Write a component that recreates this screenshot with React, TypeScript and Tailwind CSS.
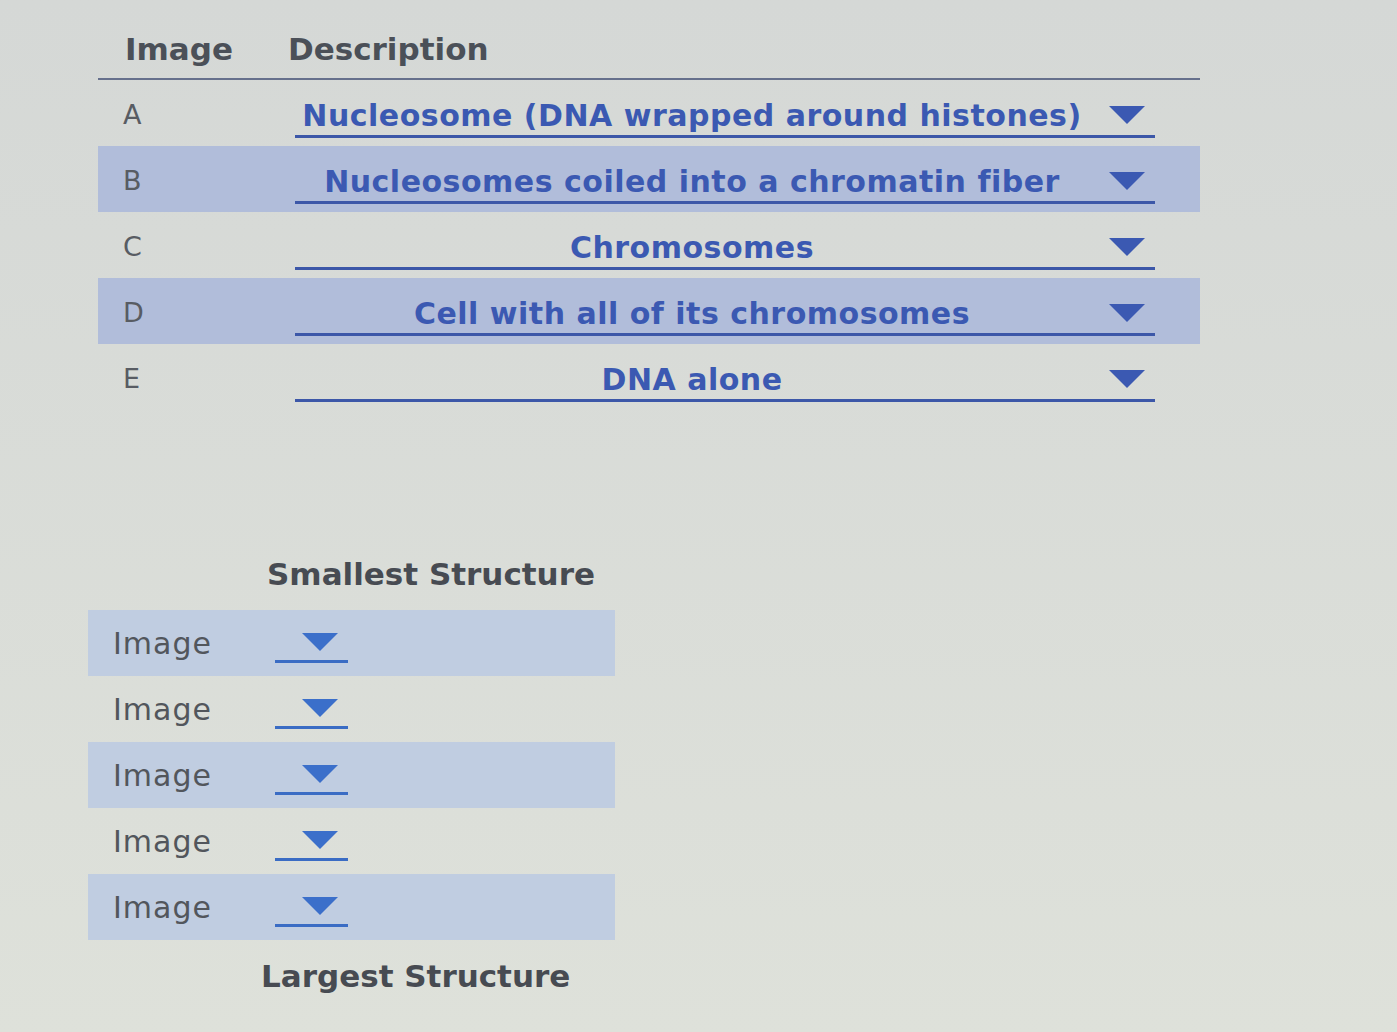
const descriptions = [
  { letter: "A", text: "Nucleosome (DNA wrapped around histones)", shaded: false },
  { letter: "B", text: "Nucleosomes coiled into a chromatin fiber", shaded: true },
  { letter: "C", text: "Chromosomes", shaded: false },
  { letter: "D", text: "Cell with all of its chromosomes", shaded: true },
  { letter: "E", text: "DNA alone", shaded: false },
];

function Arrow({ className }: { className: string }) {
  return (
    <svg viewBox="0 0 36 18" className={className}>
      <polygon points="0,0 36,0 18,18" fill="currentColor" />
    </svg>
  );
}

export default function App() {
  return (
    <div className="min-h-screen bg-linear-to-b from-[#d5d8d6] to-[#dee1da] font-['DejaVu_Sans',sans-serif]">
      <div className="pt-[20px] pl-[98px] w-[1200px]">
        <div className="flex items-center h-[60px] border-b-2 border-[#66708c] text-[#4b5058] text-[31px] font-bold">
          <div className="w-[190px] pl-[27px]">Image</div>
          <div>Description</div>
        </div>
        {descriptions.map((row) => (
          <div
            key={row.letter}
            className={`flex items-center h-[66px] ${row.shaded ? "bg-[#b1bdda]" : ""}`}
          >
            <div className="w-[197px] pl-[25px] pt-[4px] text-[27px] text-[#585c63]">{row.letter}</div>
            <div className="flex items-center w-[860px] h-[42px] mt-[7px] border-b-[3px] border-[#3c57a8] text-[#3b59b2]">
              <span className="flex-1 text-center text-[30px] font-bold tracking-[0.5px] whitespace-nowrap">
                {row.text}
              </span>
              <Arrow className="w-9 h-[18px] ml-[20px] mr-[10px]" />
            </div>
          </div>
        ))}
      </div>

      <div className="mt-[144px] pl-[88px] w-[615px]">
        <div className="pl-[179px] h-[40px] flex items-center text-[31px] font-bold text-[#474b52] mb-[16px]">
          Smallest Structure
        </div>
        {[true, false, true, false, true].map((shaded, i) => (
          <div
            key={i}
            className={`flex items-center h-[66px] ${shaded ? "bg-[#c0cde1]" : ""}`}
          >
            <div className="w-[187px] pl-[25px] text-[30px] text-[#52565c] tracking-[1px]">Image</div>
            <div className="flex items-center justify-center w-[73px] h-[40px] border-b-[3px] border-[#3a6cc4] text-[#3b6fca]">
              <Arrow className="w-[38px] h-[18px] ml-[16px]" />
            </div>
          </div>
        ))}
        <div className="pl-[173px] h-[72px] flex items-center text-[31px] font-bold text-[#474b52]">
          Largest Structure
        </div>
      </div>
    </div>
  );
}
